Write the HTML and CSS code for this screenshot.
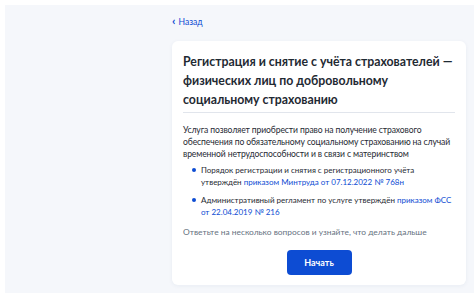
FILE: index.html
```html
<!DOCTYPE html>
<html lang="ru">
<head>
<meta charset="utf-8">
<link rel="stylesheet" href="styles.css">
</head>
<body>
<div class="page">
  <div class="column">
    <a class="back" href="#"><span class="chev">‹</span><span>Назад</span></a>
    <div class="card">
      <h1 class="title">Регистрация и снятие с учёта страхователей — физических лиц по добровольному социальному страхованию</h1>
      <div class="divider"></div>
      <p class="lead">Услуга позволяет приобрести право на получение страхового обеспечения по обязательному социальному страхованию на случай временной нетрудоспособности и в связи с материнством</p>
      <ul class="list">
        <li>Порядок регистрации и снятия с регистрационного учёта утверждён <a href="#">приказом Минтруда от 07.12.2022 № 768н</a></li>
        <li>Административный регламент по услуге утверждён <a href="#">приказом ФСС от 22.04.2019 № 216</a></li>
      </ul>
      <p class="hint">Ответьте на несколько вопросов и узнайте, что делать дальше</p>
      <div class="actions"><button class="btn">Начать</button></div>
    </div>
  </div>
</div>
</body>
</html>
```
FILE: styles.css
```css
* { box-sizing: border-box; }
html, body { margin: 0; padding: 0; background: #ffffff; }
body { font-family: Lato, "Noto Sans", sans-serif; color: #0b1f33; }
.page {
  margin: 5px 0 0 5px;
  height: 288px;
  background: #f5f7fb;
  padding: 10px 0 0 167px;
}
.column { width: 294px; }
.back {
  display: flex;
  align-items: center;
  gap: 3px;
  font-size: 8.6px;
  line-height: 14px;
  height: 14px;
  color: #0d4cd3;
  text-decoration: none;
}
.chev { font-size: 12px; font-weight: 700; margin-top: -2px; }
.card {
  margin-top: 12px;
  background: #ffffff;
  border-radius: 6px;
  box-shadow: 0 1px 4px rgba(30, 60, 120, 0.06);
  padding: 11px 11px 10px 11px;
}
.title {
  margin: 0;
  font-size: 12.3px;
  line-height: 19px;
  font-weight: 700;
  color: #1f2a33;
}
.divider { height: 1px; background: #e1e5ec; margin: 3px 0 11px; }
.lead, .list, .hint { font-size: 8.4px; line-height: 12px; }
.lead { margin: 0 -4px 0 0; color: #1f2a33; font-size: 8.6px; letter-spacing: -0.12px; }
.list { margin: 4px 0 0; padding: 0 0 0 18px; list-style: none; font-size: 8px; }
.list li { position: relative; color: #1f2a33; }
.list li + li { margin-top: 6px; }
.list li::before {
  content: "";
  position: absolute;
  left: -9px; top: 4px;
  width: 4px; height: 4px;
  border-radius: 50%;
  background: #0d4cd3;
}
.list a { color: #0d4cd3; text-decoration: none; }
.hint { margin: 8px 0 0; color: #66727f; }
.actions { display: flex; justify-content: center; margin-top: 12px; }
.btn {
  width: 65px; height: 25px;
  border: 0; border-radius: 4px;
  background: #0d4cd3; color: #fff;
  font-family: Lato, "Noto Sans", sans-serif;
  font-size: 9px;
  font-weight: 700;
}
```
